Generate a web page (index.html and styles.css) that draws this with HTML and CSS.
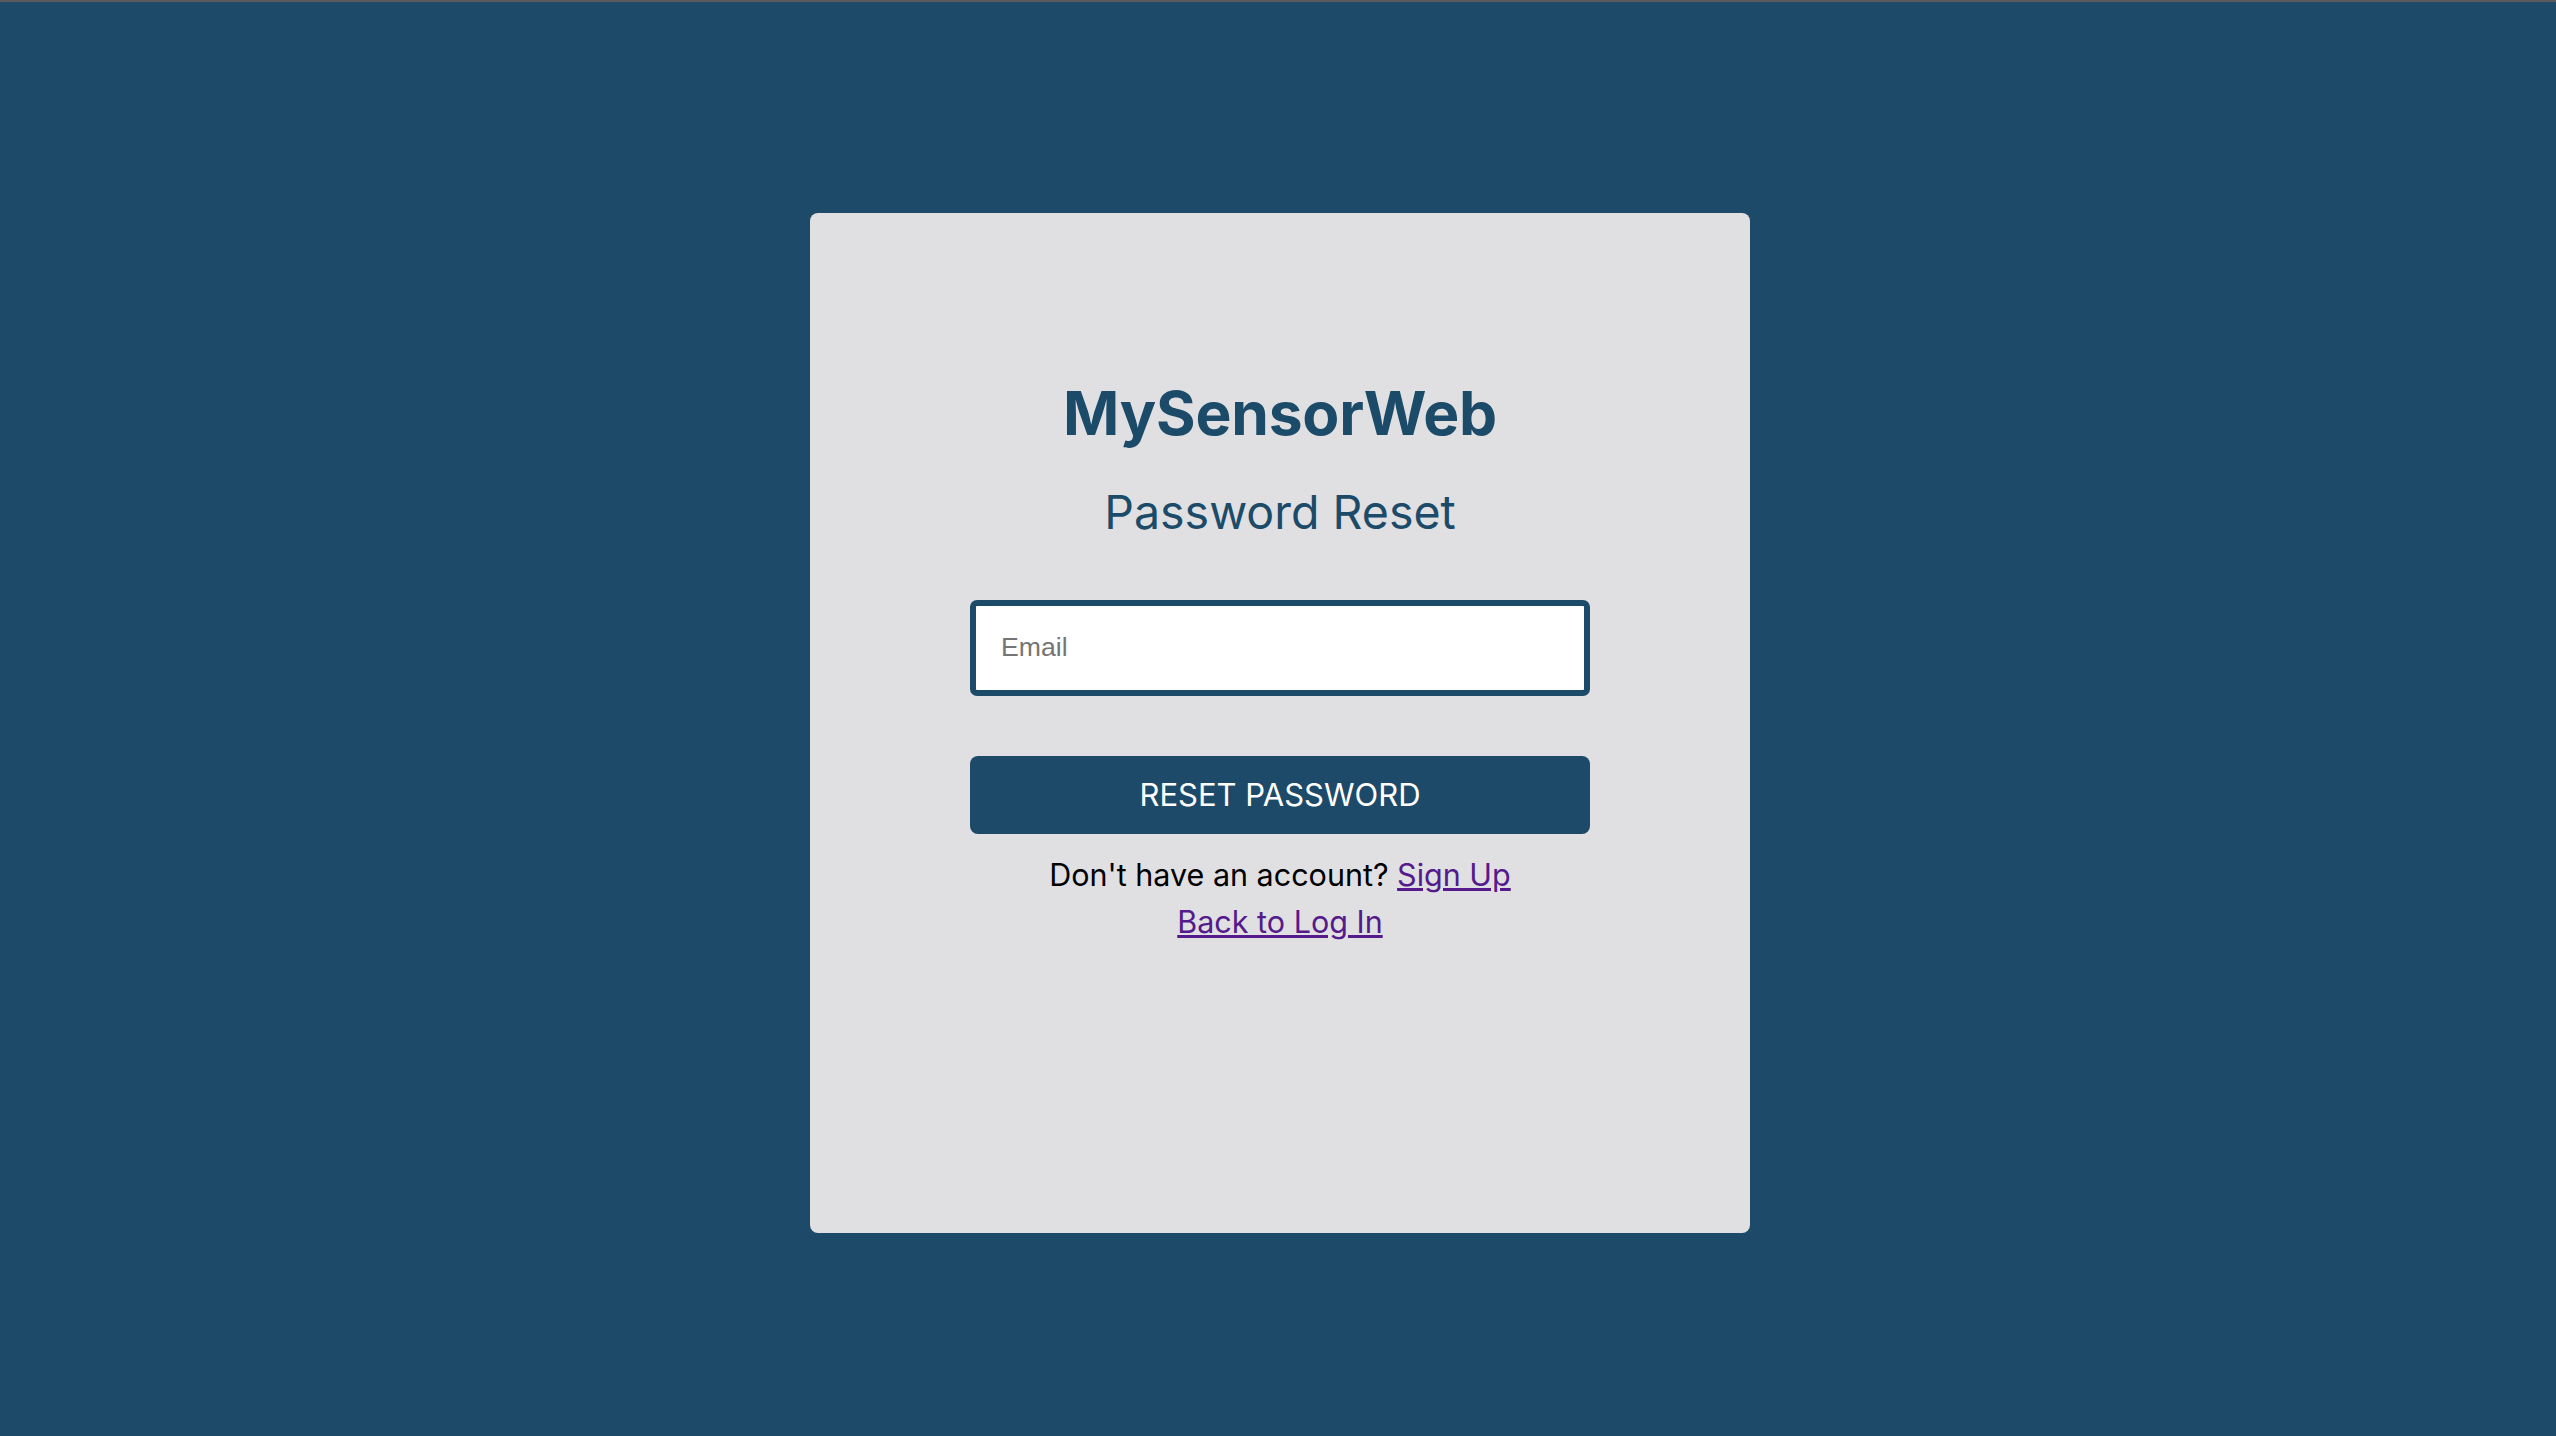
FILE: index.html
```html
<!DOCTYPE html>
<html lang="en">
<head>
<meta charset="utf-8">
<title>MySensorWeb - Password Reset</title>
<link rel="stylesheet" href="styles.css">
</head>
<body>
  <main class="card">
    <h1 class="brand">MySensorWeb</h1>
    <h2 class="subtitle">Password Reset</h2>
    <form class="form">
      <input class="email" type="email" placeholder="Email">
      <button class="submit" type="button">RESET PASSWORD</button>
    </form>
    <div class="links">
      <div class="line">Don't have an account? <a href="#signup">Sign Up</a></div>
      <div class="line"><a href="#login">Back to Log In</a></div>
    </div>
  </main>
</body>
</html>
```

FILE: styles.css
```css
html, body {
  margin: 0;
  height: 100%;
}

body {
  box-sizing: border-box;
  background: #1e4a69;
  border-top: 2px solid #5b5b5b;
  padding-top: 211px;
  padding-left: 4px;
  display: flex;
  justify-content: center;
  align-items: flex-start;
  font-family: Inter, "Noto Sans", sans-serif;
}

.card {
  box-sizing: border-box;
  width: 940px;
  height: 1020px;
  background: #e0e0e2;
  border-radius: 8px;
  padding-top: 164px;
  display: flex;
  flex-direction: column;
  align-items: center;
}

.brand {
  margin: 0;
  font-size: 60.5px;
  line-height: 72px;
  font-weight: 700;
  color: #1c4a69;
  letter-spacing: -0.2px;
}

.subtitle {
  margin: 34.5px 0 0;
  font-size: 46.5px;
  line-height: 56px;
  font-weight: 400;
  color: #1c4a69;
}

.form {
  margin: 60px 0 0;
  width: 620px;
  display: flex;
  flex-direction: column;
  gap: 60px;
}

.email {
  box-sizing: border-box;
  width: 100%;
  height: 96px;
  border: 6px solid #1c4a69;
  border-radius: 7px;
  background: #ffffff;
  padding: 0 25px;
  font-family: "Liberation Sans", Arial, sans-serif;
  font-size: 26.67px;
  color: #222;
  outline: none;
}

.email::placeholder {
  color: #757575;
}

.submit {
  box-sizing: border-box;
  width: 100%;
  height: 78px;
  border: none;
  border-radius: 8px;
  background: #1e4a69;
  color: #ffffff;
  font-family: Inter, "Noto Sans", sans-serif;
  font-size: 31px;
  font-weight: 400;
  padding: 0;
  cursor: pointer;
}

.links {
  margin-top: 17.5px;
  display: flex;
  flex-direction: column;
  align-items: center;
  color: #000;
  font-size: 30.5px;
}

.line {
  line-height: 47px;
}

.line a {
  color: #551a8b;
  text-decoration: underline;
}
```
